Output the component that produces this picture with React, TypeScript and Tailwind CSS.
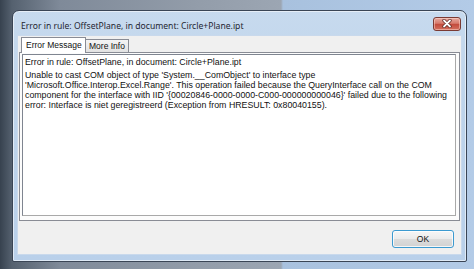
const bodyFont = "font-['Liberation_Sans',Arial,sans-serif]"
const titleFont = "font-['Noto_Sans','Open_Sans',sans-serif]"

const message = [
  "Unable to cast COM object of type 'System.__ComObject' to interface type",
  "'Microsoft.Office.Interop.Excel.Range'. This operation failed because the QueryInterface call on the COM",
  "component for the interface with IID '{00020846-0000-0000-C000-000000000046}' failed due to the following",
  'error: Interface is niet geregistreerd (Exception from HRESULT: 0x80040155).',
]

function CloseButton() {
  return (
    <div className="flex h-[14px] w-[28px] items-center justify-center rounded-[3px] border border-[#7a3a33] bg-[linear-gradient(180deg,#e6aaa0_0%,#d77a6c_45%,#c24a3b_50%,#d4705f_100%)] shadow-[inset_0_0_0_1px_rgba(255,220,210,0.5)]">
      <svg width="10" height="9" viewBox="0 0 10 9">
        <path d="M2 1.5 L8 7.5 M8 1.5 L2 7.5" stroke="#5a2420" strokeWidth="3.2" strokeLinecap="round" />
        <path d="M2 1.5 L8 7.5 M8 1.5 L2 7.5" stroke="#ffffff" strokeWidth="1.8" strokeLinecap="round" />
      </svg>
    </div>
  )
}

export default function App() {
  return (
    <div className="h-[269px] w-[474px] overflow-hidden bg-[linear-gradient(90deg,#37424f_0px,#55616f_12px,#7f8a99_60px,#939daa_200px,#9ca6b3_281px,#a8c1de_283px,#b3cbe7_474px)] pl-[12px] pt-[10px]">
      <div className="flex h-[252px] w-[455px] flex-col rounded-t-[7px] rounded-b-[2px] border border-[#3a4555] bg-[linear-gradient(180deg,#c7daee_0%,#bed4eb_40%,#b9d0ea_100%)] shadow-[inset_0_0_0_1px_rgba(255,255,255,0.55)]">
        <div className="flex h-[24px] items-center justify-between pl-[8px] pr-[5px] pt-[1px]">
          <span className={`${titleFont} mt-[5px] text-[8.6px] text-[#1f2631]`}>
            Error in rule: OffsetPlane, in document: Circle+Plane.ipt
          </span>
          <CloseButton />
        </div>

        <div className="mx-[4px] flex h-[220px] flex-col border border-[#c9d9ec] bg-[#f0f0f0] px-[1px] pt-[1px]">
          <div className={`${bodyFont} flex items-end pl-[2px] text-[8.5px] text-[#111]`}>
            <div className="relative z-10 -mb-px flex h-[16px] w-[65px] items-center border border-b-0 border-[#898c95] bg-white pl-[4px]">
              Error Message
            </div>
            <div className="flex h-[13px] w-[43px] items-center border border-b-0 border-l-0 border-[#898c95] bg-[linear-gradient(180deg,#f4f4f4,#e2e2e2)] pl-[3px]">
              More Info
            </div>
          </div>

          <div className="flex h-[169px] border border-[#898c95] bg-[#fcfcfc] pb-[4px] pl-[2px] pr-[3px] pt-[1px]">
            <div
              className={`${bodyFont} flex-1 border border-[#a9a9a9] border-l-[#7f8590] border-t-[#7f8590] bg-white pl-[2px] pt-[2px] text-[8.8px] leading-[10px] text-[#111]`}
            >
              <div className="whitespace-nowrap">Error in rule: OffsetPlane, in document: Circle+Plane.ipt</div>
              <div className="mt-[3px]">
                {message.map((line) => (
                  <div key={line} className="whitespace-nowrap">
                    {line}
                  </div>
                ))}
              </div>
            </div>
          </div>

          <div className="flex justify-end pr-[6px] pt-[9px]">
            <button
              className={`${bodyFont} h-[18px] w-[62px] rounded-[3px] border border-[#3c9ad0] bg-[linear-gradient(180deg,#f6f6f6_0%,#ebebeb_50%,#dcdcdc_51%,#d2d2d2_100%)] text-[8.5px] text-[#111] shadow-[inset_0_0_0_1px_rgba(255,255,255,0.8)]`}
            >
              OK
            </button>
          </div>
        </div>
      </div>
    </div>
  )
}
